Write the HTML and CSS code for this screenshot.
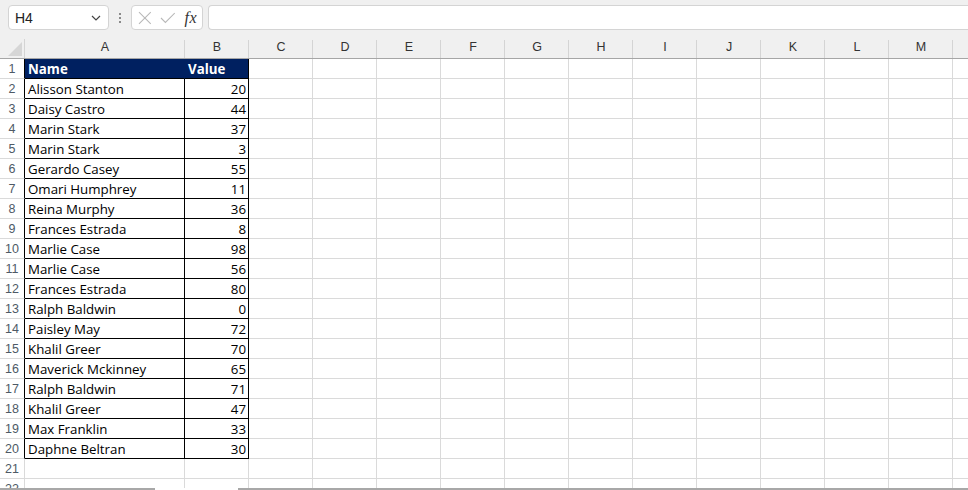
FILE: index.html
```html
<!DOCTYPE html>
<html>
<head>
<meta charset="utf-8">
<link rel="stylesheet" href="styles.css">
</head>
<body>
<div class="toolbar">
  <div class="namebox">
    <span class="ref">H4</span>
    <svg class="chev" width="10" height="6" viewBox="0 0 10 6"><path d="M1 1 L5 5 L9 1" fill="none" stroke="#444" stroke-width="1.2"/></svg>
  </div>
  <div class="dots"><i></i><i></i><i></i></div>
  <div class="fxbox">
    <svg width="14" height="14" viewBox="0 0 14 14"><path d="M1 1 L13 13 M13 1 L1 13" stroke="#b8b8b8" stroke-width="1.1" fill="none"/></svg>
    <svg width="16" height="12" viewBox="0 0 16 12"><path d="M1 6 L5.5 10.5 L15 1" stroke="#b8b8b8" stroke-width="1.1" fill="none"/></svg>
    <span class="fx">fx</span>
  </div>
  <div class="formula"></div>
</div>

<div class="sheet">
  <div class="row head">
    <div class="corner"><span class="tri"></span></div>
    <div class="ch a">A</div><div class="ch">B</div><div class="ch">C</div><div class="ch">D</div><div class="ch">E</div><div class="ch">F</div><div class="ch">G</div><div class="ch">H</div><div class="ch">I</div><div class="ch">J</div><div class="ch">K</div><div class="ch">L</div><div class="ch">M</div><div class="ch"></div>
  </div>
  <div class="row"><div class="rh in">1</div><div class="c a th">Name</div><div class="c b th">Value</div><div class="rest"></div></div>
  <div class="row"><div class="rh in">2</div><div class="c a td">Alisson Stanton</div><div class="c b td num">20</div><div class="rest"></div></div>
  <div class="row"><div class="rh in">3</div><div class="c a td">Daisy Castro</div><div class="c b td num">44</div><div class="rest"></div></div>
  <div class="row"><div class="rh in">4</div><div class="c a td">Marin Stark</div><div class="c b td num">37</div><div class="rest"></div></div>
  <div class="row"><div class="rh in">5</div><div class="c a td">Marin Stark</div><div class="c b td num">3</div><div class="rest"></div></div>
  <div class="row"><div class="rh in">6</div><div class="c a td">Gerardo Casey</div><div class="c b td num">55</div><div class="rest"></div></div>
  <div class="row"><div class="rh in">7</div><div class="c a td">Omari Humphrey</div><div class="c b td num">11</div><div class="rest"></div></div>
  <div class="row"><div class="rh in">8</div><div class="c a td">Reina Murphy</div><div class="c b td num">36</div><div class="rest"></div></div>
  <div class="row"><div class="rh in">9</div><div class="c a td">Frances Estrada</div><div class="c b td num">8</div><div class="rest"></div></div>
  <div class="row"><div class="rh in">10</div><div class="c a td">Marlie Case</div><div class="c b td num">98</div><div class="rest"></div></div>
  <div class="row"><div class="rh in">11</div><div class="c a td">Marlie Case</div><div class="c b td num">56</div><div class="rest"></div></div>
  <div class="row"><div class="rh in">12</div><div class="c a td">Frances Estrada</div><div class="c b td num">80</div><div class="rest"></div></div>
  <div class="row"><div class="rh in">13</div><div class="c a td">Ralph Baldwin</div><div class="c b td num">0</div><div class="rest"></div></div>
  <div class="row"><div class="rh in">14</div><div class="c a td">Paisley May</div><div class="c b td num">72</div><div class="rest"></div></div>
  <div class="row"><div class="rh in">15</div><div class="c a td">Khalil Greer</div><div class="c b td num">70</div><div class="rest"></div></div>
  <div class="row"><div class="rh in">16</div><div class="c a td">Maverick Mckinney</div><div class="c b td num">65</div><div class="rest"></div></div>
  <div class="row"><div class="rh in">17</div><div class="c a td">Ralph Baldwin</div><div class="c b td num">71</div><div class="rest"></div></div>
  <div class="row"><div class="rh in">18</div><div class="c a td">Khalil Greer</div><div class="c b td num">47</div><div class="rest"></div></div>
  <div class="row"><div class="rh in">19</div><div class="c a td">Max Franklin</div><div class="c b td num">33</div><div class="rest"></div></div>
  <div class="row"><div class="rh in">20</div><div class="c a td">Daphne Beltran</div><div class="c b td num">30</div><div class="rest"></div></div>
  <div class="row"><div class="rh">21</div><div class="c a"></div><div class="c b"></div><div class="rest"></div></div>
  <div class="row"><div class="rh">22</div><div class="c a"></div><div class="c b"></div><div class="rest"></div></div>
</div>

<div class="tabedge"><span class="seg1"></span><span class="seg2"></span></div>
</body>
</html>
```

FILE: styles.css
```css
html, body {
  margin: 0;
  padding: 0;
  background: #ffffff;
  overflow: hidden;
  height: 490px;
}
body {
  font-family: "Open Sans", "Liberation Sans", sans-serif;
  color: #000;
}
.toolbar {
  height: 39px;
  background: #f0f0f0;
  display: flex;
  align-items: flex-start;
  padding: 5px 0 0 8px;
  box-sizing: border-box;
}
.namebox {
  width: 101px;
  height: 25px;
  box-sizing: border-box;
  background: #fff;
  border: 1px solid #d4d4d4;
  border-radius: 4px;
  display: flex;
  align-items: center;
  justify-content: space-between;
  padding: 0 7px 0 6px;
}
.ref {
  font-family: "Liberation Sans", sans-serif;
  font-size: 14px;
  color: #222;
}
.chev { margin-top: 1px; }
.dots {
  width: 22px;
  height: 25px;
  display: flex;
  flex-direction: column;
  align-items: center;
  justify-content: center;
  gap: 2px;
}
.dots i {
  width: 2px;
  height: 2px;
  background: #8a8a8a;
  display: block;
}
.fxbox {
  width: 72px;
  height: 25px;
  box-sizing: border-box;
  background: #fff;
  border: 1px solid #d4d4d4;
  border-radius: 4px;
  display: flex;
  align-items: center;
  padding: 0 5px 0 6px;
  gap: 8px;
}
.fx {
  font-family: "Liberation Serif", serif;
  font-style: italic;
  font-size: 16px;
  color: #333;
  margin-left: 1px;
  letter-spacing: 0.5px;
}
.formula {
  flex: 1;
  margin-left: 5px;
  height: 25px;
  box-sizing: border-box;
  background: #fff;
  border: 1px solid #d4d4d4;
  border-right: none;
  border-radius: 4px 0 0 4px;
}

.sheet {
  width: 968px;
  overflow: hidden;
}
.row {
  display: flex;
  height: 20px;
  width: 1100px;
}
.row.head {
  background: #f0f0f0;
  border-bottom: 1px solid #a6a6a6;
  box-sizing: border-box;
}
.corner {
  width: 25px;
  flex: none;
  position: relative;
  border-right: 1px solid #d4d4d4;
  box-sizing: border-box;
}
.tri {
  position: absolute;
  right: 2px;
  bottom: 2px;
  width: 14px;
  height: 14px;
  background: #d6d6d6;
  clip-path: polygon(100% 0, 100% 100%, 0 100%);
}
.ch {
  width: 64px;
  flex: none;
  box-sizing: border-box;
  border-right: 1px solid #d4d4d4;
  margin-top: 1px;
  padding-left: 1px;
  text-align: center;
  font-family: "Liberation Sans", sans-serif;
  font-size: 12.5px;
  line-height: 15px;
  color: #333;
}
.ch.a { width: 160px; }

.rh {
  width: 25px;
  flex: none;
  box-sizing: border-box;
  border-right: 1px solid #dadada;
  border-bottom: 1px solid #dadada;
  text-align: center;
  font-family: "Liberation Sans", sans-serif;
  font-size: 12.5px;
  padding-top: 2px;
  line-height: 17px;
  color: #4e5a66;
  background: #fff;
}
.rh.in { border-right-color: #000; }

.c {
  flex: none;
  box-sizing: border-box;
  border-right: 1px solid #dadada;
  border-bottom: 1px solid #dadada;
  font-size: 13.3px;
  padding: 2px 2px 0 3px;
  line-height: 17px;
  white-space: nowrap;
  overflow: hidden;
}
.c.a { width: 160px; }
.c.b { width: 64px; }
.th {
  background: #002060;
  color: #fff;
  font-weight: 700;
  border-right-color: #002060;
  border-bottom-color: #000;
}
.th.b { border-right-color: #000; }
.td {
  border-right-color: #000;
  border-bottom-color: #000;
}
.num { text-align: right; }
.rest {
  flex: 1;
  box-sizing: border-box;
  border-bottom: 1px solid #dadada;
  background: repeating-linear-gradient(to right, transparent 0, transparent 63px, #dadada 63px, #dadada 64px);
}

.tabedge {
  position: fixed;
  left: 0;
  right: 0;
  bottom: 0;
  height: 2px;
  background: #fff;
}
.tabedge span {
  position: absolute;
  top: 0;
  height: 2px;
  background: #a8a8a8;
}
.seg1 { left: 0; width: 155px; }
.seg2 { left: 238px; right: 0; }
```
